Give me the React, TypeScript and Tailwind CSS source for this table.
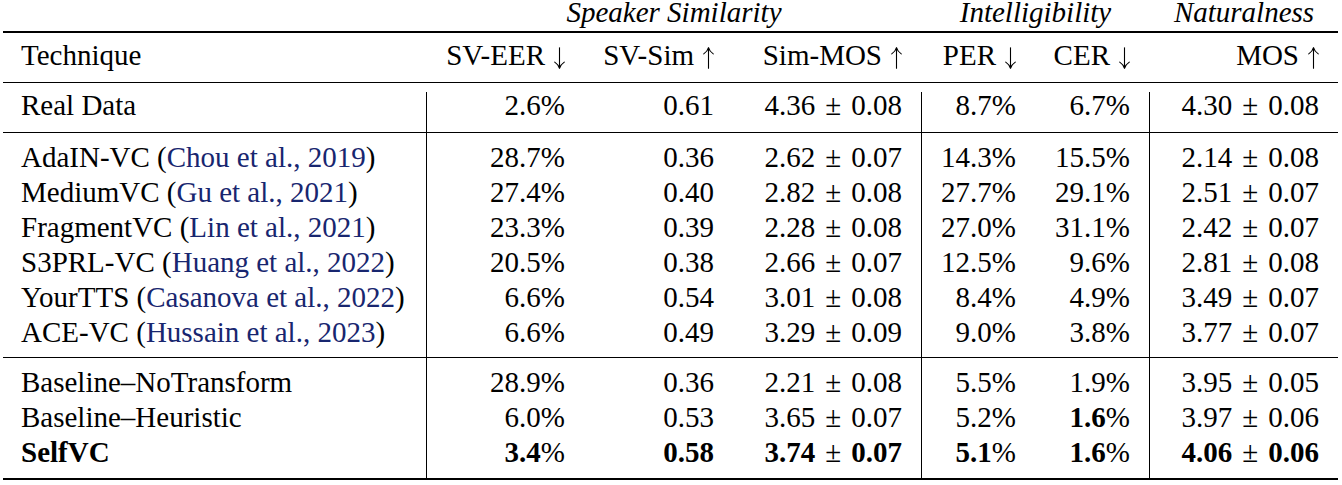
import React from 'react';

type Row = { name: string; cite?: [string, string]; bold?: boolean; vals: string[] };

const SECTION_REAL: Row[] = [
  { name: 'Real Data', vals: ['2.6%', '0.61', '4.36 ± 0.08', '8.7%', '6.7%', '4.30 ± 0.08'] },
];

const SECTION_PRIOR: Row[] = [
  { name: 'AdaIN-VC', cite: ['Chou et al.', '2019'], vals: ['28.7%', '0.36', '2.62 ± 0.07', '14.3%', '15.5%', '2.14 ± 0.08'] },
  { name: 'MediumVC', cite: ['Gu et al.', '2021'], vals: ['27.4%', '0.40', '2.82 ± 0.08', '27.7%', '29.1%', '2.51 ± 0.07'] },
  { name: 'FragmentVC', cite: ['Lin et al.', '2021'], vals: ['23.3%', '0.39', '2.28 ± 0.08', '27.0%', '31.1%', '2.42 ± 0.07'] },
  { name: 'S3PRL-VC', cite: ['Huang et al.', '2022'], vals: ['20.5%', '0.38', '2.66 ± 0.07', '12.5%', '9.6%', '2.81 ± 0.08'] },
  { name: 'YourTTS', cite: ['Casanova et al.', '2022'], vals: ['6.6%', '0.54', '3.01 ± 0.08', '8.4%', '4.9%', '3.49 ± 0.07'] },
  { name: 'ACE-VC', cite: ['Hussain et al.', '2023'], vals: ['6.6%', '0.49', '3.29 ± 0.09', '9.0%', '3.8%', '3.77 ± 0.07'] },
];

const SECTION_OURS: Row[] = [
  { name: 'Baseline–NoTransform', vals: ['28.9%', '0.36', '2.21 ± 0.08', '5.5%', '1.9%', '3.95 ± 0.05'] },
  { name: 'Baseline–Heuristic', vals: ['6.0%', '0.53', '3.65 ± 0.07', '5.2%', '**1.6**%', '3.97 ± 0.06'] },
  { name: 'SelfVC', bold: true, vals: ['**3.4**%', '**0.58**', '**3.74** ± **0.07**', '**5.1**%', '**1.6**%', '**4.06** ± **0.06**'] },
];

// sub-column widths, grouped the way the vertical rules split them
const GROUPS = [
  { label: 'Speaker Similarity', width: 'w-[495px]', cols: ['w-[157px]', 'w-[149px]', 'w-[188px]'], idx: [0, 1, 2] },
  { label: 'Intelligibility', width: 'w-[228px]', cols: ['w-[113px]', 'w-[114px]'], idx: [3, 4] },
  { label: 'Naturalness', width: 'w-[189px]', cols: ['w-[188px]'], idx: [5] },
];

const HEADS: [string, 'up' | 'down'][] = [
  ['SV-EER', 'down'],
  ['SV-Sim', 'up'],
  ['Sim-MOS', 'up'],
  ['PER', 'down'],
  ['CER', 'down'],
  ['MOS', 'up'],
];

function Arrow({ dir }: { dir: 'up' | 'down' }) {
  return (
    <svg
      viewBox="0 0 12 24"
      className={`inline-block w-[11px] h-[24px] ml-[9px] align-[-5px] ${dir === 'up' ? 'rotate-180' : ''}`}
      fill="none"
      stroke="black"
      strokeWidth="1.2"
      strokeLinecap="round"
    >
      <path d="M6 0.8 V23" />
      <path d="M0.8 16.5 C3.6 18.4 5.4 20.6 6 23.2 C6.6 20.6 8.4 18.4 11.2 16.5" />
    </svg>
  );
}

function Num({ text }: { text: string }) {
  const parts = text.split('**');
  return (
    <>
      {parts.map((p, i) =>
        i % 2 === 1 ? <b key={i} className="font-bold">{p}</b> : <span key={i}>{p}</span>
      )}
    </>
  );
}

function Val({ text }: { text: string }) {
  const [a, b] = text.split(' ± ');
  if (b === undefined) return <Num text={a} />;
  return (
    <>
      <Num text={a} />
      <span className="inline-block w-[36px] text-center">±</span>
      <Num text={b} />
    </>
  );
}

function Name({ row }: { row: Row }) {
  return (
    <div className={`whitespace-nowrap ${row.bold ? 'font-bold' : ''}`}>
      {row.name}
      {row.cite && (
        <>
          {' ('}
          <span className="text-[#18266f]">{row.cite[0]}, {row.cite[1]}</span>
          {')'}
        </>
      )}
    </div>
  );
}

function Section({ rows, cell, outer }: { rows: Row[]; cell: string; outer: string }) {
  return (
    <div className={outer}>
      <div className="flex">
        <div className={`w-[423px] pl-[18px] ${cell}`}>
          {rows.map((r) => (
            <Name key={r.name} row={r} />
          ))}
        </div>
        {GROUPS.map((g) => (
          <div key={g.label} className={`${g.width} flex border-l border-black`}>
            {g.cols.map((w, j) => (
              <div key={j} className={`${w} pr-[19px] text-right ${cell}`}>
                {rows.map((r) => (
                  <div key={r.name} className="whitespace-nowrap">
                    <Val text={r.vals[g.idx[j]]} />
                  </div>
                ))}
              </div>
            ))}
          </div>
        ))}
      </div>
    </div>
  );
}

export default function App() {
  return (
    <div className="w-[1342px] h-[485px] bg-white text-black overflow-hidden font-['Liberation_Serif','Times_New_Roman',serif] text-[29px]">
      <div className="ml-[3px] w-[1335px]">
        {/* group headings */}
        <div className="flex leading-[24px] pb-[7px] italic">
          <div className="w-[423px]" />
          {GROUPS.map((g) => (
            <div key={g.label} className={`${g.width} text-center pl-px`}>
              {g.label}
            </div>
          ))}
        </div>

        {/* column headings */}
        <div className="flex border-t-2 border-b border-black pt-[5px] pb-[9px] leading-[35px]">
          <div className="w-[423px] pl-[18px]">Technique</div>
          {GROUPS.map((g) => (
            <div key={g.label} className={`${g.width} flex border-l border-transparent`}>
              {g.cols.map((w, j) => (
                <div key={j} className={`${w} pr-[19px] text-right whitespace-nowrap`}>
                  {HEADS[g.idx[j]][0]}
                  <Arrow dir={HEADS[g.idx[j]][1]} />
                </div>
              ))}
            </div>
          ))}
        </div>

        <Section rows={SECTION_REAL} outer="pt-[9px] border-b border-black" cell="leading-[27px] pb-[13px]" />
        <Section rows={SECTION_PRIOR} outer="border-b border-black" cell="leading-[35px] py-[7px]" />
        <Section rows={SECTION_OURS} outer="border-b-2 border-black" cell="leading-[35px] pt-[7px] pb-[8px]" />
      </div>
    </div>
  );
}
